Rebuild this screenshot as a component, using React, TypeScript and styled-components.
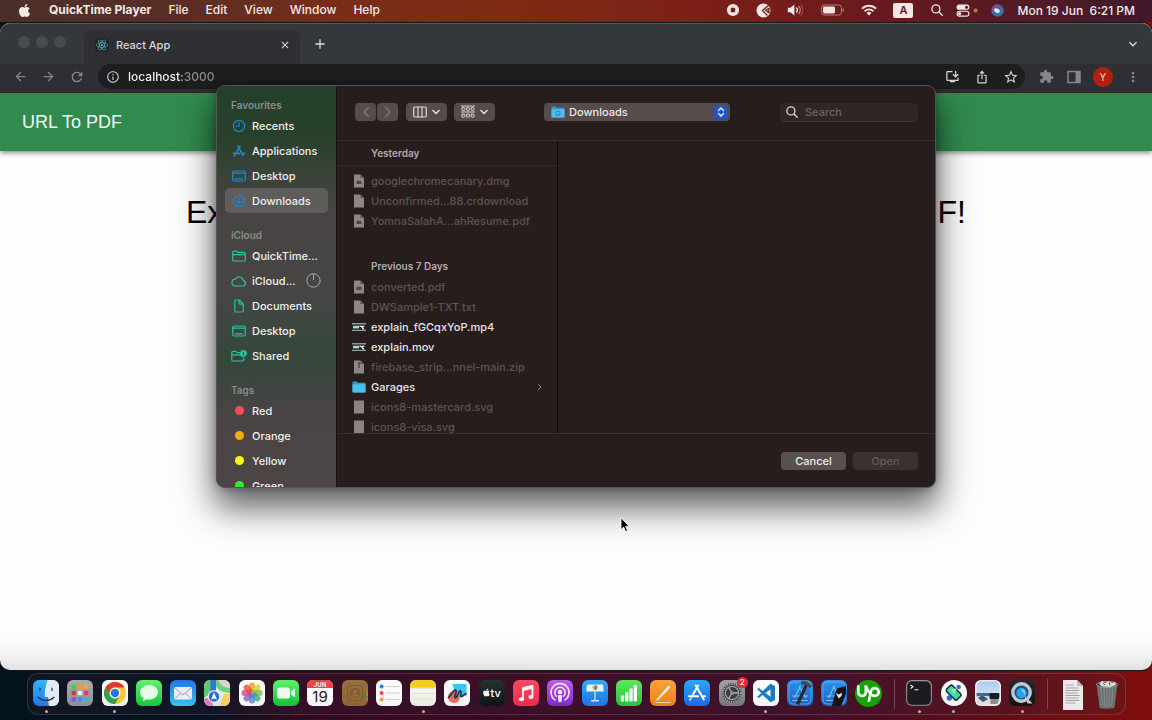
import React from "react";
import styled, { createGlobalStyle, css } from "styled-components";
import { FaApple } from "react-icons/fa";
import { SiReact, SiUpwork } from "react-icons/si";
import {
  MdArrowBack,
  MdArrowForward,
  MdClose,
  MdAdd,
  MdExtension,
  MdInfoOutline,
  MdInstallDesktop,
  MdIosShare,
  MdMoreVert,
  MdRefresh,
  MdStarBorder,
  MdKeyboardArrowDown,
} from "react-icons/md";

const GlobalStyle = createGlobalStyle`
  *, *::before, *::after { box-sizing: border-box; }
  body { margin: 0; font-family: Inter, "Liberation Sans", sans-serif; overflow: hidden; }
  button, input, select { font: inherit; color: inherit; border: 0; padding: 0; margin: 0; background: none; }
  ul { list-style: none; margin: 0; padding: 0; }
  h1, h2, h3 { margin: 0; }
  svg { display: block; flex: none; }
`;

/* ---------- Desktop and menu bar ---------- */

const Desktop = styled.div`
  min-height: 100vh;
  display: flex;
  flex-direction: column;
  background: linear-gradient(90deg, #03131c 0%, #06131f 18%, #320a20 26%, #3c0b24 50%, #430d27 70%, #5c0f1a 85%, #800f0c 100%);
`;

const MenuBar = styled.header`
  height: 22px;
  padding: 0 17px 2px;
  display: flex;
  align-items: center;
  justify-content: space-between;
  color: #f6e9e4;
  font-size: 12px;
  font-weight: 500;
  background: linear-gradient(90deg, #49302a 0%, #5c2e24 17%, #7a2d18 30%, #7f2a14 45%, #7d2017 60%, #66191f 78%, #4d1a29 92%, #40192b 100%);
`;

const MenuGroup = styled.nav`
  display: flex;
  align-items: center;
  gap: 17px;
`;

const MenuItem = styled.button<{ $strong?: boolean }>`
  font-weight: ${(p) => (p.$strong ? 700 : 500)};
  line-height: 16px;
`;

const StatusGroup = styled.div<{ $gap: number }>`
  display: flex;
  align-items: center;
  gap: ${(p) => p.$gap}px;
`;

const InputSource = styled.span`
  width: 20px;
  height: 15px;
  border-radius: 2px;
  background: #f5e6e3;
  color: #5e1d22;
  font-size: 11px;
  font-weight: 600;
  line-height: 15px;
  text-align: center;
`;

/* ---------- Browser ---------- */

const Browser = styled.main`
  flex: 1;
  margin-top: 1px;
  display: flex;
  flex-direction: column;
  position: relative;
  border-radius: 10px;
  background: linear-gradient(180deg, #fdfdfd calc(100% - 36px), #f6f6f6 calc(100% - 18px), #e2e2e2 100%);
  box-shadow: 0 0 1px 1px #16191b;
`;

const TabStrip = styled.div`
  height: 41px;
  padding: 0 11px 0 18px;
  display: flex;
  align-items: center;
  border-radius: 10px 10px 0 0;
  border-top: 1px solid #55595b;
  background: #34383a;
  color: #d6d7d9;
`;

const Lights = styled.div`
  display: flex;
  gap: 6px;
  width: 66px;
  margin-bottom: 4px;
`;

const Light = styled.span`
  width: 12px;
  height: 12px;
  border-radius: 50%;
  background: #484b4e;
`;

const Tab = styled.div`
  width: 216px;
  height: 34px;
  margin-top: 6px;
  padding: 0 8px 5px 11px;
  display: flex;
  align-items: center;
  border-radius: 8px 8px 0 0;
  background: #2f2f33;
  font-size: 11px;
  font-weight: 500;
`;

const Favicon = styled.span`
  width: 14px;
  height: 14px;
  margin-right: 7px;
  display: grid;
  place-items: center;
  border-radius: 3px;
  background: #20262b;
  color: #58b9cf;
`;

const TabTitle = styled.span`
  flex: 1;
`;

const IconButton = styled.button<{ $size?: number; $color?: string }>`
  width: ${(p) => p.$size ?? 15}px;
  height: ${(p) => p.$size ?? 15}px;
  display: grid;
  place-items: center;
  color: ${(p) => p.$color ?? "#d6d7d9"};
`;

const NewTab = styled(IconButton)`
  margin: 0 auto 0 12px;
`;

const Toolbar = styled.div`
  height: 29px;
  padding: 0 12px 4px 13px;
  display: flex;
  align-items: center;
  gap: 12px;
  background: #2f2f33;
`;

const HistoryButtons = styled.div`
  display: flex;
  gap: 13px;
`;

const AddressBar = styled.label`
  flex: 1;
  height: 25px;
  margin: 0 2px;
  padding: 0 7px 0 8px;
  display: flex;
  align-items: center;
  gap: 14px;
  border-radius: 13px;
  background: #1d1e20;
  color: #c9cacc;
`;

const AddressInput = styled.input`
  flex: 1;
  min-width: 0;
  margin-left: -6px;
  outline: 0;
  font-size: 12px;
  font-weight: 500;
  color: #ffffff;
  -webkit-text-fill-color: transparent;
  background: linear-gradient(90deg, #ffffff 54px, #8d9093 54px);
  -webkit-background-clip: text;
  background-clip: text;
`;

const Avatar = styled.button`
  width: 20px;
  height: 20px;
  border-radius: 50%;
  background: #b3200f;
  color: #f3d9d5;
  font-size: 10px;
`;

const AppBar = styled.div`
  height: 58px;
  padding: 1px 22px 0;
  display: flex;
  align-items: center;
  background: #318a4e;
  color: #f7fbf8;
  font-family: "Liberation Sans", sans-serif;
  font-size: 18px;
  box-shadow: 0 2px 5px rgba(0, 0, 0, 0.45);
`;

const Headline = styled.h1`
  width: 780px;
  max-width: 100%;
  margin: 43px auto 0;
  display: flex;
  justify-content: space-between;
  font-family: "Liberation Sans", sans-serif;
  font-size: 32px;
  font-weight: 400;
  line-height: 36px;
  color: #000000;
`;

const Pointer = styled.svg`
  position: absolute;
  left: 620px;
  top: 494px;
`;

/* ---------- File dialog ---------- */

const Overlay = styled.div`
  position: absolute;
  top: 62px;
  left: 0;
  right: 0;
  display: flex;
  justify-content: center;
`;

const Dialog = styled.section`
  width: 720px;
  height: 403px;
  display: flex;
  overflow: hidden;
  border-radius: 9px;
  border: 1px solid #5b5351;
  background: #271d1d;
  color: #e3dddc;
  font-size: 11px;
  font-weight: 500;
  box-shadow: 0 18px 34px 2px rgba(0, 0, 0, 0.62), 0 0 8px rgba(0, 0, 0, 0.3);
`;

const Sidebar = styled.aside`
  width: 120px;
  flex: none;
  padding: 11px 8px 0;
  overflow: hidden;
  border-right: 1px solid #171111;
  background: linear-gradient(180deg, #24402a 0%, #28402c 13%, #3a4339 22%, #474443 32%, #474645 50%, #3d4740 60%, #35473a 68%, #3d453f 74%, #4a4444 82%, #4b4545 100%);
`;

const SideHeading = styled.h2`
  height: 16px;
  padding-left: 6px;
  font-size: 10px;
  font-weight: 600;
  line-height: 16px;
  color: #8a8d88;

  ul + & { margin-top: 14px; }
`;

const SideItem = styled.li<{ $active?: boolean }>`
  height: 25px;
  padding: 0 7px 0 6px;
  display: flex;
  align-items: center;
  gap: 5px;
  border-radius: 5px;
  color: #f0eeec;
  white-space: nowrap;
  ${(p) => p.$active && css`background: #5f5d5b;`}

  svg:last-child:not(:first-child) { margin-left: auto; }
`;

const IconSlot = styled.span`
  width: 16px;
  flex: none;
  display: grid;
  place-items: center;
`;

const Dot = styled.span<{ $color: string }>`
  width: 9px;
  height: 9px;
  border-radius: 50%;
  background: ${(p) => p.$color};
`;

const DialogMain = styled.div`
  flex: 1;
  display: flex;
  flex-direction: column;
`;

const DialogBar = styled.div`
  height: 55px;
  padding: 0 17px 2px 18px;
  display: flex;
  align-items: center;
  border-bottom: 1px solid #3a3030;
`;

const barControl = css`
  height: 18px;
  border-radius: 4px;
  background: #564c4b;
  display: flex;
  align-items: center;
`;

const NavButton = styled.button`
  ${barControl}
  width: 21px;
  margin-right: 1px;
  justify-content: center;
  color: #867c7b;
`;

const ViewButton = styled.button`
  ${barControl}
  width: 41px;
  margin-left: 7px;
  padding: 0 7px;
  justify-content: space-between;
  color: #ded7d6;
`;

const FolderPicker = styled.label`
  ${barControl}
  width: 186px;
  margin-left: 49px;
  padding: 0 2px 0 7px;
  gap: 4px;
`;

const FolderSelect = styled.select`
  flex: 1;
  appearance: none;
  outline: 0;
  color: #ede7e6;
`;

const Stepper = styled.span`
  width: 14px;
  height: 14px;
  display: grid;
  place-items: center;
  border-radius: 4px;
  background: #1e56cf;
`;

const SearchBox = styled.label`
  width: 138px;
  height: 19px;
  margin-left: auto;
  padding: 0 6px;
  display: flex;
  align-items: center;
  gap: 7px;
  border-radius: 5px;
  border-bottom: 1px solid #423838;
  background: #302626;
  color: #e0d8d7;
`;

const SearchInput = styled.input`
  width: 100%;
  min-width: 0;
  outline: 0;
  &::placeholder { color: #6d6362; opacity: 1; }
`;

const Columns = styled.div`
  flex: 1;
  min-height: 0;
  display: flex;
`;

const FileColumn = styled.div`
  width: 221px;
  overflow: hidden;
  border-right: 1px solid #060404;
`;

const FileHeading = styled.h3<{ $pinned?: boolean }>`
  height: ${(p) => (p.$pinned ? 25 : 22)}px;
  margin: ${(p) => (p.$pinned ? "0 0 5px" : "24px 0 0")};
  padding-left: 34px;
  border-bottom: ${(p) => (p.$pinned ? "1px solid #362c2c" : "0")};
  font-size: 10px;
  font-weight: 600;
  line-height: ${(p) => (p.$pinned ? 24 : 22)}px;
  color: #b3abaa;
`;

const FileRow = styled.li<{ $enabled?: boolean }>`
  height: 20px;
  padding: 0 14px 0 15px;
  display: flex;
  align-items: center;
  gap: 5px;
  line-height: 20px;
  white-space: nowrap;
  color: ${(p) => (p.$enabled ? "#eae4e3" : "#5d5352")};
`;

const FileName = styled.span`
  flex: 1;
`;

const Footer = styled.div`
  height: 54px;
  padding: 0 17px;
  display: flex;
  align-items: center;
  justify-content: flex-end;
  gap: 7px;
  border-top: 1px solid #3a3030;
`;

const PushButton = styled.button`
  width: 65px;
  height: 18px;
  border-radius: 4px;
  background: #5a504f;
  color: #f1ecea;
  line-height: 18px;

  &:disabled {
    background: #3a3030;
    color: #655b5a;
  }
`;

/* ---------- Dock ---------- */

const DockArea = styled.footer`
  height: 50px;
  padding: 3px 26px 5px 27px;
`;

const Dock = styled.ul`
  height: 42px;
  padding: 0 5px;
  display: flex;
  align-items: flex-start;
  justify-content: space-between;
  border-radius: 11px;
  border: 1px solid rgba(255, 255, 255, 0.13);
  background: rgba(60, 35, 55, 0.22);
`;

const DockItem = styled.li<{ $running?: boolean }>`
  width: 26px;
  padding-top: 6px;
  display: flex;
  flex-direction: column;
  align-items: center;
  gap: 4px;
  position: relative;

  ${(p) =>
    p.$running &&
    css`
      &::after {
        content: "";
        width: 3px;
        height: 3px;
        border-radius: 50%;
        background: #c7a9b3;
      }
    `}
`;

const DockDivider = styled.li`
  width: 8px;
  height: 30px;
  margin-top: 5px;
  display: flex;
  justify-content: center;

  &::before {
    content: "";
    width: 1px;
    background: rgba(255, 255, 255, 0.22);
  }
`;

const Badge = styled.span`
  position: absolute;
  top: 3px;
  right: -3px;
  width: 11px;
  height: 11px;
  border-radius: 50%;
  background: #e8293b;
  color: #ffffff;
  font-size: 8px;
  line-height: 11px;
  text-align: center;
`;

/* ---------- Small drawings ---------- */

const Line = ({ w = 14, h = 14, vb, color = "currentColor", sw = 1.2, children }: {
  w?: number; h?: number; vb?: string; color?: string; sw?: number; children: React.ReactNode;
}) => (
  <svg width={w} height={h} viewBox={vb ?? `0 0 ${w} ${h}`} fill="none" stroke={color} strokeWidth={sw} strokeLinecap="round" strokeLinejoin="round" aria-hidden="true">
    {children}
  </svg>
);

const BLUE = "#1f86d6";
const TEAL = "#27c3a2";

const sideIcons = {
  recents: <Line color={BLUE}><circle cx="7" cy="7" r="5.6" /><path d="M7 3.6V7H4.4" /></Line>,
  apps: <Line color={BLUE} sw={1.6}><path d="M6 2.2 10.8 11.4M8 2.2 3.6 9.6M1.4 9.4h6M10 9.4h2.8M2.9 11l-.5.9" /></Line>,
  desktop: (c: string) => <Line color={c}><rect x=".7" y="2" width="12.6" height="10" rx="1.4" /><path d="M1 4.2h12M3.2 9.8h7.6" /></Line>,
  downloads: <Line color={BLUE}><circle cx="7" cy="7" r="5.6" /><path d="M7 4.2v5.2M4.9 7.5 7 9.6l2.1-2.1" /></Line>,
  folder: <Line color={TEAL}><path d="M.7 11V3.2c0-.7.4-1.1 1.1-1.1h2.6l1.2 1.3h6.5c.7 0 1.2.5 1.2 1.1V11c0 .6-.5 1-1.2 1H1.9c-.7 0-1.2-.4-1.2-1zM.8 5.6h12.4" /></Line>,
  cloud: <Line w={16} h={14} color={TEAL}><path d="M4.2 12h7.6a2.9 2.9 0 0 0 .4-5.7A4.1 4.1 0 0 0 4.5 5.2 3.4 3.4 0 0 0 4.2 12z" /></Line>,
  doc: <Line color={TEAL}><path d="M2.8 1h4.4l4 4v6.9c0 .7-.4 1.1-1.1 1.1H3.9c-.7 0-1.1-.4-1.1-1.1V1zM7 1.2v3c0 .6.4 1 1 1h3" /></Line>,
  shared: <Line w={16} h={14} color={TEAL}><path d="M8.6 3.6H6L4.9 2.4H1.8c-.6 0-1 .4-1 1V11c0 .6.4 1 1 1h10c.6 0 1-.4 1-1V8.8M1 5.8h7.6" /><circle cx="12.4" cy="4.4" r="2.9" fill={TEAL} /><path d="M12.4 3v.4M12.4 4.6v1.3" stroke="#37473b" /></Line>,
};

const SyncRing = () => (
  <Line w={15} h={15} color="#a5a5a2" sw={1}><circle cx="7.5" cy="7.5" r="6.7" /><path d="M7.5 1v5.6" /></Line>
);

const Chevron = () => <Line w={8} h={6} sw={1.6}><path d="M1 1.5 4 4.5 7 1.5" /></Line>;

const Folder = ({ ring }: { ring?: boolean }) => (
  <svg width="14" height="12" viewBox="0 0 14 12" aria-hidden="true">
    <path d="M.5 1.5C.5.9.9.5 1.5.5h3l1.2 1.2h6.8c.6 0 1 .4 1 1v7.8c0 .6-.4 1-1 1h-11c-.6 0-1-.4-1-1z" fill="#2e9ad0" />
    <path d="M.5 3.2h13v7.3c0 .6-.4 1-1 1h-11c-.6 0-1-.4-1-1z" fill="#4fbde9" />
    {ring && <circle cx="7" cy="7.2" r="2" fill="none" stroke="#2b8dc0" strokeWidth="1.1" />}
  </svg>
);

type FileKind = "page" | "pageImage" | "zip" | "video" | "folder" | "svg";

const FileIcon = ({ kind }: { kind: FileKind }) => {
  if (kind === "folder") return <Folder />;
  if (kind === "video")
    return (
      <svg width="14" height="14" viewBox="0 0 14 14" aria-hidden="true">
        <rect y="3" width="14" height="8" fill="#1c2624" />
        <path d="M0 3.2h14v1.2H0z" fill="#aab4b1" />
        <path d="M1 5.8h6v2.6H1z" fill="#a9d8c6" />
        <path d="M7.400 5.800h5v1.200h-1.400l1.600 2.600h-1.800L9 7H7.400z" fill="#e4eae8" />
        <path d="M0 9.800h14v1.200H0z" fill="#98a19f" />
      </svg>
    );
  if (kind === "svg")
    return (
      <svg width="14" height="14" viewBox="0 0 14 14" aria-hidden="true">
        <path d="M2 .5h10v13H2z" fill="#8a8483" />
      </svg>
    );
  return (
    <svg width="14" height="14" viewBox="0 0 14 14" aria-hidden="true">
      <path d="M2 .5h6.4L12 4.1v9.4H2z" fill="#8d8887" />
      <path d="M8.4.5V4.1H12z" fill="#5c5655" />
      {kind === "pageImage" && <path d="M4.500 6.800h5v3.200h-5z" fill="#4d4746" />}
      {kind === "zip" && <path d="M6.2 2h1.6v6H6.2z" fill="#4d4746" />}
    </svg>
  );
};

/* ---------- Menu bar status icons ---------- */

const CREAM = "#f5e6e3";

const Recording = () => (
  <svg width="14" height="14" viewBox="0 0 14 14"><circle cx="7" cy="7" r="6.1" fill={CREAM} /><rect x="4.8" y="4.8" width="4.4" height="4.4" rx=".8" fill="#6e2118" /></svg>
);
const Kite = () => (
  <svg width="15" height="15" viewBox="0 0 15 15"><circle cx="7.500" cy="7.500" r="7" fill={CREAM} /><path d="M12.800 2.200 6.400 7.400l5 5.200M9.600 7.400l3.400-2.200v4.600z" stroke="#6e2118" strokeWidth="1.300" fill="none" strokeLinejoin="round" /></svg>
);
const Volume = () => (
  <svg width="18" height="14" viewBox="0 0 18 14" fill="none" strokeWidth="1.3" strokeLinecap="round">
    <path d="M.8 4.8h2.6L7.4 1.6v10.8L3.4 9.2H.8z" fill={CREAM} />
    <path d="M9.6 5a3 3 0 0 1 0 4" stroke={CREAM} /><path d="M11.8 3.4a5.4 5.4 0 0 1 0 7.2" stroke="#c98b80" /><path d="M14 2a8 8 0 0 1 0 10" stroke="#98473b" />
  </svg>
);
const Battery = () => (
  <svg width="24" height="12" viewBox="0 0 24 12"><rect x=".5" y="1" width="20" height="10" rx="2.6" fill="none" stroke="#b87f76" /><rect x="2" y="2.5" width="12" height="7" rx="1.4" fill={CREAM} /><path d="M21.6 4.2c1 .3 1.4 1 1.4 1.8s-.4 1.5-1.4 1.8z" fill="#b87f76" /></svg>
);
const Wifi = () => (
  <svg width="16" height="12" viewBox="0 0 16 12" fill="none" stroke={CREAM} strokeWidth="1.9"><path d="M1 4.6a10 10 0 0 1 14 0M3.6 7.2a6.3 6.3 0 0 1 8.8 0" /><path d="M5.6 9a3.4 3.4 0 0 1 4.8 0L8 11.6z" fill={CREAM} stroke="none" /></svg>
);
const Magnifier = () => (
  <Line w={12} h={12} sw={1.3}><circle cx="4.9" cy="4.9" r="4" /><path d="m8 8 3.2 3.2" /></Line>
);
const ControlCentre = () => (
  <svg width="22" height="13" viewBox="0 0 22 13"><rect x=".6" y=".6" width="12.8" height="5.2" rx="2.6" fill={CREAM} /><circle cx="10.6" cy="3.2" r="1.5" fill="#571a25" /><rect x="1.1" y="7.3" width="11.8" height="4.8" rx="2.4" fill="none" stroke={CREAM} strokeWidth="1.1" /><circle cx="3.7" cy="9.7" r="1.6" fill={CREAM} /><circle cx="19.6" cy="6.5" r="2" fill="#c7791c" /></svg>
);
const Siri = () => (
  <svg width="13" height="13" viewBox="0 0 13 13">
    <defs><linearGradient id="siri" x1="0" y1="0" x2="1" y2="1"><stop offset="0" stopColor="#c23a7a" /><stop offset=".45" stopColor="#4b5fae" /><stop offset="1" stopColor="#1c8e8f" /></linearGradient></defs>
    <circle cx="6.5" cy="6.5" r="6.2" fill="url(#siri)" /><ellipse cx="6.2" cy="6.6" rx="3" ry="2" fill="#d9f1f0" transform="rotate(25 6 6)" />
  </svg>
);

/* ---------- Dock icons ---------- */

const Tile = ({ from, to, id, children }: { from: string; to: string; id: string; children?: React.ReactNode }) => (
  <svg width="26" height="26" viewBox="0 0 26 26" aria-hidden="true">
    <defs>
      <linearGradient id={id} x1="0" y1="0" x2="0" y2="1"><stop offset="0" stopColor={from} /><stop offset="1" stopColor={to} /></linearGradient>
      <clipPath id={`${id}-clip`}><rect width="26" height="26" rx="6" /></clipPath>
    </defs>
    <g clipPath={`url(#${id}-clip)`}>
      <rect width="26" height="26" fill={`url(#${id})`} />
      {children}
    </g>
  </svg>
);

const Finder = () => (
  <Tile id="finder" from="#35b4fb" to="#1c7ae6">
    <path d="M14.6 0H26v26H16c-.7-3-.9-6-.9-9h-3.3C11.8 10.6 12.6 5 14.6 0z" fill="#e2eaf3" />
    <path d="M7 8v2.4M19 8v2.4M5 17.2c4.600 4.400 11.400 4.400 16 0" stroke="#1b2f4d" strokeWidth="1.2" fill="none" strokeLinecap="round" />
  </Tile>
);
const Launchpad = () => {
  const colors = ["#3fcf4d", "#f39a26", "#f7a63a", "#d8363c", "#f0f0f0", "#e0405b", "#8c52d9", "#3b8ff0", "#30b8d8"];
  return (
    <Tile id="launchpad" from="#a9abb0" to="#8e9095">
      {colors.map((c, i) => <rect key={i} x={4.5 + (i % 3) * 6.2} y={4.5 + Math.floor(i / 3) * 6.2} width="4.6" height="4.6" rx="1.2" fill={c} />)}
    </Tile>
  );
};
const Chrome = () => (
  <Tile id="chrome" from="#ffffff" to="#ececec">
    <circle cx="13" cy="13" r="11" fill="#fcc934" />
    <path d="M3.47 7.5a11 11 0 0 1 19.06 0H13a5.5 5.5 0 0 0-4.76 8.25z" fill="#de3b2f" />
    <path d="M3.47 7.5 8.24 15.75A5.5 5.5 0 0 0 17.76 15.75L13 24A11 11 0 0 1 3.47 7.5z" fill="#2da14f" />
    <circle cx="13" cy="13" r="5.4" fill="#fff" /><circle cx="13" cy="13" r="4.2" fill="#2a73e8" />
  </Tile>
);
const Messages = () => (
  <Tile id="messages" from="#5df36a" to="#14c738">
    <path d="M13 5c5.2 0 9 3.2 9 7.3s-3.8 7.3-9 7.3c-1 0-2-.1-2.900-.4-.9.9-2.200 1.600-3.700 1.700.7-.7 1.200-1.600 1.300-2.700C5.500 17 4 14.900 4 12.300 4 8.200 7.800 5 13 5z" fill="#e9f9ea" />
  </Tile>
);
const Mail = () => (
  <Tile id="mail" from="#2276e4" to="#38c0f6">
    <rect x="4" y="7" width="18" height="12.5" rx="1.5" fill="#eceff2" />
    <path d="M4.5 7.6 13 15l8.5-7.4M4.5 19l6.2-6M21.5 19l-6.2-6" stroke="#8d98a5" strokeWidth=".9" fill="none" />
  </Tile>
);
const Maps = () => (
  <Tile id="maps" from="#e8f3ea" to="#d6e8da">
    <path d="M0 0h7v13L0 18z" fill="#5acb67" /><path d="M12 0h14v10c-7 0-12-4-14-10z" fill="#d8d4cb" />
    <path d="M14 0c2 5 6 8 12 8v5C17 13 11 8 9.5 0z" fill="#69d273" /><path d="M6.5 0h5.5v15H6.5z" fill="#3173e6" />
    <path d="M0 19c5-3 8 1 9 7H0z" fill="#e478b6" /><path d="M20 14h6v12H16z" fill="#f6d05e" />
    <circle cx="10" cy="16.5" r="6.2" fill="#fff" /><circle cx="10" cy="16.5" r="5.3" fill="#2d6ee0" /><path d="m10 12.6 3 7.2-3-1.5-3 1.5z" fill="#fff" />
  </Tile>
);
const Photos = () => {
  const petals = ["#f59d1f", "#d8d22b", "#7ec242", "#39a887", "#4a8fdc", "#8b62c7", "#cf4b8e", "#ea4f3c"];
  return (
    <Tile id="photos" from="#ffffff" to="#f3f3f3">
      {petals.map((c, i) => <rect key={i} x="10" y="2.5" width="6" height="10" rx="3" fill={c} opacity=".82" transform={`rotate(${i * 45} 13 13)`} />)}
    </Tile>
  );
};
const FaceTime = () => (
  <Tile id="facetime" from="#5cf36b" to="#10c437">
    <rect x="4" y="7.5" width="13" height="11" rx="2.8" fill="#edf9ee" /><path d="m18 11.5 4-2.9v8.8l-4-2.9z" fill="#edf9ee" />
  </Tile>
);
const Calendar = () => (
  <Tile id="calendar" from="#ffffff" to="#f4f4f4">
    <rect width="26" height="8" fill="#ea4646" />
    <text x="13" y="6.6" fontSize="6" fontWeight="600" textAnchor="middle" fill="#fff" fontFamily="Inter, sans-serif">JUN</text>
    <text x="13" y="21.5" fontSize="15" textAnchor="middle" fill="#222" fontFamily="Inter, sans-serif">19</text>
  </Tile>
);
const Contacts = () => (
  <Tile id="contacts" from="#96703c" to="#8b6634">
    <path d="M24.5 7H26v4h-1.500z" fill="#e2574c" /><path d="M24.5 12H26v4h-1.500z" fill="#4bb86a" /><path d="M24.5 17H26v4h-1.500z" fill="#3f8fe0" />
    <rect x="5.5" y="5.5" width="15" height="15" rx="3" fill="none" stroke="#7d5a2c" /><circle cx="13" cy="13" r="5" fill="#7f5c2e" />
    <circle cx="13" cy="11.5" r="1.9" fill="#94703f" /><path d="M9.6 16.4c.6-1.700 1.800-2.500 3.400-2.500s2.800.8 3.400 2.500z" fill="#94703f" />
  </Tile>
);
const Reminders = () => (
  <Tile id="reminders" from="#ffffff" to="#f4f4f4">
    {["#2b7bf3", "#ea4540", "#f3973a"].map((c, i) => (
      <g key={c}><circle cx="5.6" cy={6.5 + i * 6.5} r="2" fill={c} /><path d={`M9.5 ${6.5 + i * 6.5}h14`} stroke="#cfcfd3" strokeWidth="1" /></g>
    ))}
  </Tile>
);
const Notes = () => (
  <Tile id="notes" from="#fbfaf6" to="#ebe9e4">
    <rect width="26" height="7.5" fill="#f8cb1f" /><path d="M0 8h26" stroke="#c9b777" strokeDasharray="1 1" /><path d="M3 13.5h20M3 19h20" stroke="#dcdad5" strokeWidth=".8" />
  </Tile>
);
const Freeform = () => (
  <Tile id="freeform" from="#ffffff" to="#f2f2f2">
    <path d="M8.500 4h14v12H12z" fill="#3dc3ec" /><circle cx="10" cy="17" r="6" fill="#ef6a4f" />
    <path d="M4.5 17.5c3-2 5-8.500 7.200-7.500 2 1-2.500 7.500-.4 7.900 2.200.4 3-7.600 5.200-6.900 1.800.6-1 5.400.8 5.700 1.400.2 2.600-2.700 4.700-3.200" stroke="#15385f" strokeWidth="1.7" fill="none" strokeLinecap="round" />
  </Tile>
);
const AppleTV = () => (
  <Tile id="tv" from="#26332e" to="#0e1416">
    <g transform="translate(3 8)"><FaApple size={9} color="#fff" /></g>
    <text x="11.5" y="16.6" fontSize="11" fontWeight="500" fill="#fff" fontFamily="Inter, sans-serif">tv</text>
  </Tile>
);
const Music = () => (
  <Tile id="music" from="#fb4962" to="#f02a4b">
    <path d="M10 19V8l9.5-2.2v11" stroke="#fff" strokeWidth="1.7" fill="none" /><path d="M10 9.8 19.5 7.6" stroke="#fff" strokeWidth="2.4" />
    <ellipse cx="8.3" cy="19.2" rx="2.5" ry="2" fill="#fff" /><ellipse cx="17.8" cy="17" rx="2.5" ry="2" fill="#fff" />
  </Tile>
);
const Podcasts = () => (
  <Tile id="podcasts" from="#c25bf0" to="#7d2cc7">
    <g fill="none" stroke="#f4e6fb" strokeWidth="1.5" strokeLinecap="round"><path d="M8 20a9 9 0 1 1 10 0" /><path d="M9.4 16.2a5.2 5.2 0 1 1 7.2 0" /></g>
    <circle cx="13" cy="12" r="2.3" fill="#f4e6fb" /><path d="M10.8 16c0-1.400 4.400-1.400 4.400 0l-.7 5.300c-.2 1.200-2.800 1.200-3 0z" fill="#f4e6fb" />
  </Tile>
);
const Keynote = () => (
  <Tile id="keynote" from="#36a6fb" to="#1b75e8">
    <path d="M5 4.500h16l.8 7H4.200z" fill="#edf3f8" /><circle cx="13" cy="7.6" r="2.4" fill="#e98f33" /><path d="M13 5.2a2.4 2.4 0 0 1 0 4.8z" fill="#3aa65b" /><path d="M12.4 11.5h1.2V20h-1.2zM9 20h8v1.600H9z" fill="#dce7f1" />
  </Tile>
);
const Numbers = () => (
  <Tile id="numbers" from="#5bea5a" to="#25c43b">
    <g fill="#fff"><rect x="4.8" y="15.5" width="3.3" height="6" rx=".8" /><rect x="9.1" y="12" width="3.3" height="9.5" rx=".8" /><rect x="13.4" y="8.5" width="3.3" height="13" rx=".8" /><rect x="17.7" y="5" width="3.3" height="16.5" rx=".8" /></g>
  </Tile>
);
const Pages = () => (
  <Tile id="pages" from="#fba33a" to="#ef7f1c">
    <path d="M6 20 18.5 5.5l2 1.7L8 20.2z" fill="#fff" /><path d="M5.5 22.5h15" stroke="#fdd6ac" strokeWidth="1.2" />
  </Tile>
);
const AppStore = () => (
  <Tile id="appstore" from="#2fa4fb" to="#1a68ea">
    <g stroke="#fff" strokeWidth="2" strokeLinecap="round" fill="none"><path d="M14.2 5.5 7.5 17M11.8 5.5 19.8 19.5M5 16.2h9.2M18.3 16.2H21M6.2 19.6l.3-.4" /></g>
  </Tile>
);
const Settings = () => (
  <Tile id="settings" from="#9fa1a6" to="#75777c">
    <circle cx="13" cy="13" r="10" fill="#3b3d41" /><circle cx="13" cy="13" r="9" fill="none" stroke="#a8aaae" strokeWidth="1.8" strokeDasharray="1.3 1" />
    <circle cx="13" cy="13" r="6.7" fill="none" stroke="#9da0a5" strokeWidth="1.2" /><path d="M13 13h7M13 13 9.5 7M13 13l-3.500 6" stroke="#a8aaae" strokeWidth="1.4" /><circle cx="13" cy="13" r="2" fill="#8f9297" />
  </Tile>
);
const VSCode = () => (
  <Tile id="vscode" from="#ffffff" to="#f4f4f4">
    <path d="M17.5 3.800 22 5.900v14.200l-4.500 2.100L9.700 15l-3.900 3L4 17.100l4.300-4.100L4 8.900 5.800 8l3.900 3zM17.500 9.200 12.500 13l5 3.800z" fill="#1d7ac4" fillRule="evenodd" />
  </Tile>
);
const Blueprint = ({ id, children }: { id: string; children: React.ReactNode }) => (
  <Tile id={id} from="#2d95ee" to="#1a5fc4">
    <rect x="2" y="2" width="22" height="22" rx="4" fill="none" stroke="#62aef3" strokeWidth=".8" />
    <path d="M13.5 6 7.5 18M12 6l7 12M5 16h16M5 20.500h16" stroke="#7cc0f6" strokeWidth="1.1" fill="none" />
    {children}
  </Tile>
);
const Xcode = () => (
  <Blueprint id="xcode"><path d="m18.5 3.500 2.500 1.500-9 20-3-1.500z" fill="#26292d" /><path d="M14 1.500c4-1.500 7 0 11 4.500l-2 2.500-3-3-6-1.500z" fill="#44484d" /></Blueprint>
);
const Simulator = () => (
  <Blueprint id="simulator"><path d="M16 8.500 25 6v8l-5 12h-9l1.500-7z" fill="#121316" /><path d="m15 13 3 1.500 3-2-.5 3.500-3 2.500z" fill="#e4e6e9" /></Blueprint>
);
const Upwork = () => (
  <svg width="27" height="27" viewBox="0 0 27 27" aria-hidden="true"><circle cx="13.5" cy="13.5" r="13.5" fill="#17a305" /><g transform="translate(2 2)"><SiUpwork size={23} color="#fff" /></g></svg>
);
const Terminal = () => (
  <Tile id="terminal" from="#9a9a9e" to="#77777b">
    <rect x="1.2" y="1.2" width="23.6" height="23.6" rx="5" fill="#1b1c1f" /><path d="m4.5 5 2.500 1.800-2.500 1.800M8.500 9.800h4" stroke="#f0f0f0" strokeWidth="1.1" fill="none" />
  </Tile>
);
const Emulator = () => (
  <svg width="28" height="26" viewBox="0 0 28 28" aria-hidden="true">
    <circle cx="14" cy="14" r="14" fill="#fcfcfd" /><circle cx="9" cy="19.5" r="3" fill="#3d6be0" /><circle cx="19" cy="7.5" r="2.5" fill="#3d6be0" />
    <rect x="9.5" y="5.5" width="9" height="16" rx="2" fill="#3ddc9a" stroke="#10263e" strokeWidth="1.6" transform="rotate(-45 14 14)" /><path d="m11 10 6-1-3 7z" fill="#9af0cf" />
  </svg>
);
const Preview = () => (
  <Tile id="preview" from="#a9c9ee" to="#eef3f8">
    <path d="M1 13h24v4H1z" fill="#2e66b0" /><path d="M1 16.500c6-1.500 12 0 24 1V25H1z" fill="#d9dde2" />
    <path d="M3 18l4-3 6 4-5 3zM9 19l9-4" fill="#4b545e" /><rect x="14.5" y="13" width="10" height="6" rx="1.5" fill="#1a1c1f" /><path d="M15.500 19h8v5h-8z" fill="#888d93" />
    <rect x=".8" y=".8" width="24.4" height="24.4" rx="5.400" fill="none" stroke="#e8eaed" strokeWidth="1.600" />
  </Tile>
);
const QuickTime = () => (
  <Tile id="quicktime" from="#232a30" to="#101316">
    <circle cx="12.5" cy="12.5" r="8.7" fill="#17527f" stroke="#c3c8ce" strokeWidth="3.4" /><circle cx="12.5" cy="13" r="5.2" fill="#2d9eea" /><path d="M12 9c3 .3 5 3 4 6-1.500-2.500-3-3.500-4-6z" fill="#7fe0fb" /><path d="m15.500 15.500 8 8h-5z" fill="#c3c8ce" />
  </Tile>
);
const Document = () => (
  <svg width="22" height="30" viewBox="0 0 22 30" aria-hidden="true">
    <path d="M1 0h14l6 6v24H1z" fill="#ecebea" /><path d="M15 0v6h6z" fill="#bdbbb9" />
    <path d="M3.5 5h8M3.500 8h13M3.500 10.500h14M3.500 13h12M3.500 15.500h14M3.500 18h13M3.500 20.500h14M3.500 23h10" stroke="#a3a1a0" strokeWidth="1" />
  </svg>
);
const Trash = () => (
  <svg width="24" height="30" viewBox="0 0 24 30" aria-hidden="true">
    <path d="M1.500 4h21l-3 23.500c-.3 1.600-14.700 1.600-15 0z" fill="#6d7072" /><path d="M6 7l1.500 19M12 7v20M18 7l-1.500 19M9 7l.8 20M15 7l-.8 20" stroke="#8d9092" strokeWidth=".8" />
    <ellipse cx="12" cy="4.500" rx="10.700" ry="3" fill="#34373a" stroke="#9a9da0" /><path d="m4 4 3-3 3 2 4-2 3 2 3-1 1 3-6 2-8-.5z" fill="#dcdcda" /><path d="m8 3 2 2M14 2l1 3" stroke="#555" />
  </svg>
);

type DockApp = { name: string; icon: React.ReactNode; running?: boolean; badge?: string };

const dockApps: (DockApp | null)[] = [
  { name: "Finder", icon: <Finder />, running: true },
  { name: "Launchpad", icon: <Launchpad /> },
  { name: "Chrome", icon: <Chrome />, running: true },
  { name: "Messages", icon: <Messages /> },
  { name: "Mail", icon: <Mail /> },
  { name: "Maps", icon: <Maps /> },
  { name: "Photos", icon: <Photos /> },
  { name: "FaceTime", icon: <FaceTime /> },
  { name: "Calendar", icon: <Calendar /> },
  { name: "Contacts", icon: <Contacts /> },
  { name: "Reminders", icon: <Reminders /> },
  { name: "Notes", icon: <Notes />, running: true },
  { name: "Freeform", icon: <Freeform /> },
  { name: "TV", icon: <AppleTV /> },
  { name: "Music", icon: <Music /> },
  { name: "Podcasts", icon: <Podcasts /> },
  { name: "Keynote", icon: <Keynote /> },
  { name: "Numbers", icon: <Numbers /> },
  { name: "Pages", icon: <Pages /> },
  { name: "App Store", icon: <AppStore /> },
  { name: "Settings", icon: <Settings />, badge: "2" },
  { name: "Visual Studio Code", icon: <VSCode />, running: true },
  { name: "Xcode", icon: <Xcode /> },
  { name: "Simulator", icon: <Simulator /> },
  { name: "Upwork", icon: <Upwork /> },
  null,
  { name: "Terminal", icon: <Terminal />, running: true },
  { name: "Emulator", icon: <Emulator />, running: true },
  { name: "Preview", icon: <Preview /> },
  { name: "QuickTime", icon: <QuickTime />, running: true },
  null,
];

const files: { title: string; rows: { name: string; kind: FileKind; enabled?: boolean }[] }[] = [
  {
    title: "Yesterday",
    rows: [
      { name: "googlechromecanary.dmg", kind: "pageImage" },
      { name: "Unconfirmed...88.crdownload", kind: "page" },
      { name: "YomnaSalahA...ahResume.pdf", kind: "pageImage" },
    ],
  },
  {
    title: "Previous 7 Days",
    rows: [
      { name: "converted.pdf", kind: "pageImage" },
      { name: "DWSample1-TXT.txt", kind: "page" },
      { name: "explain_fGCqxYoP.mp4", kind: "video", enabled: true },
      { name: "explain.mov", kind: "video", enabled: true },
      { name: "firebase_strip...nnel-main.zip", kind: "zip" },
      { name: "Garages", kind: "folder", enabled: true },
      { name: "icons8-mastercard.svg", kind: "svg" },
      { name: "icons8-visa.svg", kind: "svg" },
    ],
  },
];

const places: { title: string; items: { label: string; icon: React.ReactNode; active?: boolean; syncing?: boolean }[] }[] = [
  {
    title: "Favourites",
    items: [
      { label: "Recents", icon: sideIcons.recents },
      { label: "Applications", icon: sideIcons.apps },
      { label: "Desktop", icon: sideIcons.desktop(BLUE) },
      { label: "Downloads", icon: sideIcons.downloads, active: true },
    ],
  },
  {
    title: "iCloud",
    items: [
      { label: "QuickTime...", icon: sideIcons.folder },
      { label: "iCloud...", icon: sideIcons.cloud, syncing: true },
      { label: "Documents", icon: sideIcons.doc },
      { label: "Desktop", icon: sideIcons.desktop(TEAL) },
      { label: "Shared", icon: sideIcons.shared },
    ],
  },
  {
    title: "Tags",
    items: [
      { label: "Red", icon: <Dot $color="#f4505a" /> },
      { label: "Orange", icon: <Dot $color="#f9a80c" /> },
      { label: "Yellow", icon: <Dot $color="#f8f812" /> },
      { label: "Green", icon: <Dot $color="#1ff23a" /> },
    ],
  },
];

const FileDialog = () => (
  <Overlay>
    <Dialog role="dialog" aria-label="Open">
      <Sidebar>
        {places.map((group) => (
          <React.Fragment key={group.title}>
            <SideHeading>{group.title}</SideHeading>
            <ul>
              {group.items.map((item) => (
                <SideItem key={item.label} $active={item.active}>
                  <IconSlot>{item.icon}</IconSlot>
                  {item.label}
                  {item.syncing && <SyncRing />}
                </SideItem>
              ))}
            </ul>
          </React.Fragment>
        ))}
      </Sidebar>
      <DialogMain>
        <DialogBar>
          <NavButton aria-label="Back"><Line w={8} h={12}><path d="M6.5 1.5 2 6l4.500 4.500" /></Line></NavButton>
          <NavButton aria-label="Forward"><Line w={8} h={12}><path d="M1.5 1.5 6 6l-4.500 4.500" /></Line></NavButton>
          <ViewButton aria-label="Column view">
            <Line w={14} h={12}><rect x=".7" y="1" width="12.6" height="10" rx="1.2" /><path d="M5 1v10M9 1v10" /></Line>
            <Chevron />
          </ViewButton>
          <ViewButton aria-label="Group by">
            <Line w={14} h={14} sw={1}>
              <path d="M.5 1h13M.5 7h13" />
              {[0, 1, 2].map((i) => (
                <React.Fragment key={i}><rect x={0.9 + i * 4.6} y="2.7" width="3" height="2.6" rx=".6" /><rect x={0.9 + i * 4.6} y="9.2" width="3" height="2.8" rx=".6" /></React.Fragment>
              ))}
            </Line>
            <Chevron />
          </ViewButton>
          <FolderPicker>
            <Folder ring />
            <FolderSelect aria-label="Folder" defaultValue="Downloads"><option>Downloads</option></FolderSelect>
            <Stepper><Line w={8} h={12} color="#fff" sw={1.4}><path d="M1.5 4.5 4 2l2.500 2.500M1.500 7.500 4 10l2.500-2.500" /></Line></Stepper>
          </FolderPicker>
          <SearchBox>
            <Magnifier />
            <SearchInput type="text" placeholder="Search" aria-label="Search" />
          </SearchBox>
        </DialogBar>
        <Columns>
          <FileColumn>
            {files.map((group, index) => (
              <React.Fragment key={group.title}>
                <FileHeading $pinned={index === 0}>{group.title}</FileHeading>
                <ul>
                  {group.rows.map((row) => (
                    <FileRow key={row.name} $enabled={row.enabled}>
                      <FileIcon kind={row.kind} />
                      <FileName>{row.name}</FileName>
                      {row.kind === "folder" && <Line w={6} h={8} color="#8d8584" sw={1}><path d="M1.5 1.5 4 4 1.5 6.5" /></Line>}
                    </FileRow>
                  ))}
                </ul>
              </React.Fragment>
            ))}
          </FileColumn>
        </Columns>
        <Footer>
          <PushButton>Cancel</PushButton>
          <PushButton disabled>Open</PushButton>
        </Footer>
      </DialogMain>
    </Dialog>
  </Overlay>
);

export default function App() {
  return (
    <Desktop>
      <GlobalStyle />
      <MenuBar>
        <MenuGroup>
          <FaApple size={15} />
          <MenuItem $strong>QuickTime Player</MenuItem>
          {["File", "Edit", "View", "Window", "Help"].map((label) => <MenuItem key={label}>{label}</MenuItem>)}
        </MenuGroup>
        <StatusGroup $gap={18}>
          <StatusGroup $gap={16}>
            <Recording /><Kite /><Volume /><Battery /><Wifi /><InputSource>A</InputSource>
          </StatusGroup>
          <StatusGroup $gap={13}>
            <Magnifier /><ControlCentre /><Siri /><time>Mon 19 Jun&nbsp; 6:21 PM</time>
          </StatusGroup>
        </StatusGroup>
      </MenuBar>

      <Browser>
        <TabStrip>
          <Lights><Light /><Light /><Light /></Lights>
          <Tab>
            <Favicon><SiReact size={12} /></Favicon>
            <TabTitle>React App</TabTitle>
            <IconButton aria-label="Close tab"><MdClose size={12} /></IconButton>
          </Tab>
          <NewTab $size={16} aria-label="New tab"><MdAdd size={16} /></NewTab>
          <IconButton $size={16} aria-label="Search tabs"><MdKeyboardArrowDown size={16} /></IconButton>
        </TabStrip>
        <Toolbar>
          <HistoryButtons>
            <IconButton aria-label="Back" $color="#85878a"><MdArrowBack size={15} /></IconButton>
            <IconButton aria-label="Forward" $color="#85878a"><MdArrowForward size={15} /></IconButton>
            <IconButton aria-label="Reload" $color="#85878a"><MdRefresh size={16} /></IconButton>
          </HistoryButtons>
          <AddressBar>
            <MdInfoOutline size={14} />
            <AddressInput type="text" defaultValue="localhost:3000" aria-label="Address" />
            <IconButton aria-label="Install"><MdInstallDesktop size={15} /></IconButton>
            <IconButton aria-label="Share"><MdIosShare size={14} /></IconButton>
            <IconButton aria-label="Bookmark"><MdStarBorder size={16} /></IconButton>
          </AddressBar>
          <IconButton aria-label="Extensions" $color="#85878a"><MdExtension size={15} /></IconButton>
          <IconButton aria-label="Side panel" $color="#85878a">
            <svg width="14" height="14" viewBox="0 0 14 14"><rect x="1" y="1.5" width="12" height="11" fill="none" stroke="currentColor" strokeWidth="1.5" /><path d="M8.5 1.5H13v11H8.500z" fill="currentColor" /></svg>
          </IconButton>
          <Avatar>Y</Avatar>
          <IconButton aria-label="Menu" $color="#85878a"><MdMoreVert size={16} /></IconButton>
        </Toolbar>
        <AppBar>URL To PDF</AppBar>
        <Headline><span>Ex</span><span>F!</span></Headline>
        <FileDialog />
        <Pointer width="11" height="16" viewBox="0 0 11 16" aria-hidden="true">
          <path d="M1 .8v11.800l2.700-2.500 1.900 4.400 2-.9-1.900-4.200h3.500z" fill="#000" stroke="#fff" strokeWidth=".8" />
        </Pointer>
      </Browser>

      <DockArea>
        <Dock>
          {dockApps.map((app, index) =>
            app ? (
              <DockItem key={app.name} $running={app.running} title={app.name}>
                {app.icon}
                {app.badge && <Badge>{app.badge}</Badge>}
              </DockItem>
            ) : (
              <DockDivider key={index} />
            ),
          )}
          <DockItem title="Recent document"><Document /></DockItem>
          <DockItem title="Bin"><Trash /></DockItem>
        </Dock>
      </DockArea>
    </Desktop>
  );
}
